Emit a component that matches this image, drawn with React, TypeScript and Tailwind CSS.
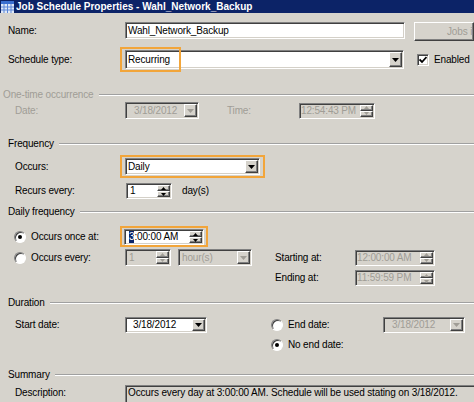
import React from "react";

const sunken =
  "border border-t-[#808080] border-l-[#808080] border-b-white border-r-white shadow-[inset_1px_1px_0_#404040,inset_-1px_-1px_0_#d4d0c8] p-[1px]";
const raised =
  "border border-t-white border-l-white border-b-[#404040] border-r-[#404040] shadow-[inset_-1px_-1px_0_#808080] bg-[#d6d3cc]";

function DropBtn({ disabled }: { disabled?: boolean }) {
  return (
    <div className={`${raised} w-[13px] shrink-0 flex items-center justify-center`}>
      <svg width="7" height="4" viewBox="0 0 7 4">
        <path d="M0 0h7L3.5 4z" fill={disabled ? "#a09d96" : "#000"} />
      </svg>
    </div>
  );
}

function Spin({ disabled }: { disabled?: boolean }) {
  const c = disabled ? "#a09d96" : "#000";
  return (
    <div className="flex flex-col w-[13px] shrink-0">
      <div className={`${raised} flex-1 flex items-center justify-center`}>
        <svg width="5" height="3" viewBox="0 0 5 3">
          <path d="M0 3h5L2.5 0z" fill={c} />
        </svg>
      </div>
      <div className={`${raised} flex-1 flex items-center justify-center`}>
        <svg width="5" height="3" viewBox="0 0 5 3">
          <path d="M0 0h5L2.5 3z" fill={c} />
        </svg>
      </div>
    </div>
  );
}

function Field({
  w,
  h,
  children,
  disabled,
  drop,
  spin,
  pad = "pl-[1px]",
}: {
  w: string;
  h: string;
  children?: React.ReactNode;
  disabled?: boolean;
  drop?: boolean;
  spin?: boolean;
  pad?: string;
}) {
  return (
    <div
      className={`${sunken} ${w} ${h} shrink-0 flex items-stretch ${
        disabled ? "bg-[#d6d3cc] text-[#a09d96]" : "bg-white text-black"
      }`}
    >
      <div className={`flex-1 flex items-center whitespace-nowrap overflow-hidden ${pad}`}>
        {children}
      </div>
      {drop && <DropBtn disabled={disabled} />}
      {spin && <Spin disabled={disabled} />}
    </div>
  );
}

function Orange({ cls }: { cls: string }) {
  return (
    <div
      className={`absolute border-2 border-[#f2a53a] pointer-events-none ${cls}`}
    />
  );
}

function Header({ text, gray, pl = "pl-[8px]" }: { text: string; gray?: boolean; pl?: string }) {
  return (
    <div className={`flex items-center h-[12px] ${pl}`}>
      <span className={gray ? "text-[#a09d96]" : "text-black"}>{text}</span>
      <div className="flex-1 ml-[5px] h-[2px] border-t border-t-[#a0a0a0] border-b border-b-white" />
    </div>
  );
}

function Radio({ on }: { on?: boolean }) {
  return (
    <div className="w-[12px] h-[12px] rounded-full border border-t-[#808080] border-l-[#808080] border-b-white border-r-white bg-white flex items-center justify-center shadow-[inset_1px_1px_0_#404040] shrink-0">
      {on && <div className="w-[4px] h-[4px] rounded-full bg-black" />}
    </div>
  );
}

export default function App() {
  return (
    <div className="w-[474px] h-[402px] overflow-hidden bg-[#d6d3cc] text-[10px] leading-[12px] tracking-[-0.15px] text-black font-['Liberation_Sans',Arial,sans-serif] flex flex-col">
      {/* title bar */}
      <div className="h-[13px] shrink-0 bg-[#0c2367] flex items-center">
        <svg width="13" height="12" viewBox="0 0 13 12" className="ml-[1px]">
          <rect x="0" y="0" width="13" height="12" fill="#dfe8f6" />
          <rect x="0" y="0" width="13" height="3" fill="#3a6fd0" />
          <path d="M0 6h13M0 9h13M3 3v9M6.5 3v9M10 3v9" stroke="#5a86d8" strokeWidth="1" />
        </svg>
        <span className="ml-[2px] font-bold text-white tracking-normal">Job Schedule Properties - Wahl_Network_Backup</span>
      </div>

      {/* Name */}
      <div className="mt-[9px] flex items-start h-[19px] shrink-0">
        <div className="w-[125px] shrink-0 pl-[8px] pt-[3px]">Name:</div>
        <Field w="w-[280px]" h="h-[17px]">Wahl_Network_Backup</Field>
        <div className={`${raised} ml-[9px] w-[60px] h-[19px] shrink-0 flex items-center pl-[32px] text-[#a09d96] whitespace-nowrap overflow-hidden`}>
          Jobs in Schedule
        </div>
      </div>

      {/* Schedule type */}
      <div className="mt-[9px] flex items-center h-[19px] shrink-0">
        <div className="w-[125px] shrink-0 pl-[8px]">Schedule type:</div>
        <div className="relative">
          <Field w="w-[279px]" h="h-[19px]" drop>
            Recurring
          </Field>
          <Orange cls="left-[-5px] top-[-3px] w-[61px] h-[25px]" />
        </div>
        <div className={`${sunken} ml-[13px] w-[12px] h-[12px] bg-white flex items-center justify-center p-0`}>
          <svg width="8" height="8" viewBox="0 0 8 8">
            <path d="M0.5 3.5L3 6L7.5 1" stroke="#000" strokeWidth="1.8" fill="none" />
          </svg>
        </div>
        <span className="ml-[5px]">Enabled</span>
      </div>

      {/* One-time occurrence */}
      <div className="mt-[20px] shrink-0">
        <Header text="One-time occurrence" gray pl="pl-[3px]" />
      </div>
      <div className="mt-[1px] flex items-center h-[17px] shrink-0 text-[#a09d96]">
        <div className="w-[125px] shrink-0 pl-[15px]">Date:</div>
        <Field w="w-[74px]" h="h-[17px]" disabled drop pad="pl-[7px]">
          3/18/2012
        </Field>
        <div className="w-[100px] shrink-0 pl-[28px]">Time:</div>
        <Field w="w-[76px]" h="h-[16px]" disabled spin pad="pl-0">
          12:54:43 PM
        </Field>
      </div>

      {/* Frequency */}
      <div className="mt-[19px] shrink-0">
        <Header text="Frequency" />
      </div>
      <div className="mt-[8px] flex items-center h-[17px] shrink-0">
        <div className="w-[125px] shrink-0 pl-[15px]">Occurs:</div>
        <div className="relative">
          <Field w="w-[135px]" h="h-[17px]" drop>
            Daily
          </Field>
          <Orange cls="left-[-5px] top-[-3px] w-[145px] h-[23px]" />
        </div>
      </div>
      <div className="mt-[8px] flex items-center h-[16px] shrink-0">
        <div className="w-[126px] shrink-0 pl-[15px]">Recurs every:</div>
        <Field w="w-[46px]" h="h-[16px]" spin pad="pl-[2px]">
          1
        </Field>
        <span className="ml-[10px]">day(s)</span>
      </div>

      {/* Daily frequency */}
      <div className="mt-[7px] shrink-0">
        <Header text="Daily frequency" />
      </div>
      <div className="mt-[11px] flex items-center h-[16px] shrink-0">
        <div className="w-[124px] shrink-0 pl-[14px] flex items-center">
          <Radio on />
          <span className="ml-[5px]">Occurs once at:</span>
        </div>
        <div className="relative">
          <Field w="w-[80px]" h="h-[16px]" spin pad="pl-[3px]">
            <span className="bg-[#0a246a] text-white">3</span>:00:00 AM
          </Field>
          <Orange cls="left-[-4px] top-[-3px] w-[88px] h-[21px]" />
        </div>
      </div>
      <div className="mt-[4px] flex items-center h-[17px] shrink-0">
        <div className="w-[125px] shrink-0 pl-[14px] flex items-center">
          <Radio />
          <span className="ml-[5px]">Occurs every:</span>
        </div>
        <Field w="w-[46px]" h="h-[17px]" disabled spin pad="pl-[2px]">
          1
        </Field>
        <div className="ml-[7px]">
          <Field w="w-[74px]" h="h-[17px]" disabled drop pad="pl-[2px]">
            hour(s)
          </Field>
        </div>
        <div className="w-[103px] shrink-0 pl-[23px]">Starting at:</div>
        <Field w="w-[80px]" h="h-[16px]" disabled spin pad="pl-0">
          12:00:00 AM
        </Field>
      </div>
      <div className="mt-[4px] flex items-center h-[16px] shrink-0">
        <div className="w-[355px] shrink-0 pl-[275px]">Ending at:</div>
        <Field w="w-[80px]" h="h-[16px]" disabled spin pad="pl-0">
          11:59:59 PM
        </Field>
      </div>

      {/* Duration */}
      <div className="mt-[11px] shrink-0">
        <Header text="Duration" />
      </div>
      <div className="mt-[8px] flex items-center h-[16px] shrink-0">
        <div className="w-[125px] shrink-0 pl-[15px]">Start date:</div>
        <Field w="w-[82px]" h="h-[16px]" drop pad="pl-[6px]">
          3/18/2012
        </Field>
        <div className="w-[176px] shrink-0 pl-[64px] flex items-center">
          <Radio />
          <span className="ml-[5px]">End date:</span>
        </div>
        <Field w="w-[82px]" h="h-[16px]" disabled drop pad="pl-[7px]">
          3/18/2012
        </Field>
      </div>
      <div className="mt-[5px] flex items-center h-[14px] shrink-0">
        <div className="pl-[271px] flex items-center">
          <Radio on />
          <span className="ml-[5px]">No end date:</span>
        </div>
      </div>

      {/* Summary */}
      <div className="mt-[17px] shrink-0">
        <Header text="Summary" />
      </div>
      <div className="mt-[4px] flex items-start shrink-0">
        <div className="w-[125px] shrink-0 pl-[15px] pt-[2px]">Description:</div>
        <div className={`${sunken} w-[380px] h-[40px] shrink-0 bg-[#d6d3cc] pl-[2px] pt-[1px] whitespace-nowrap`}>
          Occurs every day at 3:00:00 AM. Schedule will be used stating on 3/18/2012.
        </div>
      </div>
    </div>
  );
}
